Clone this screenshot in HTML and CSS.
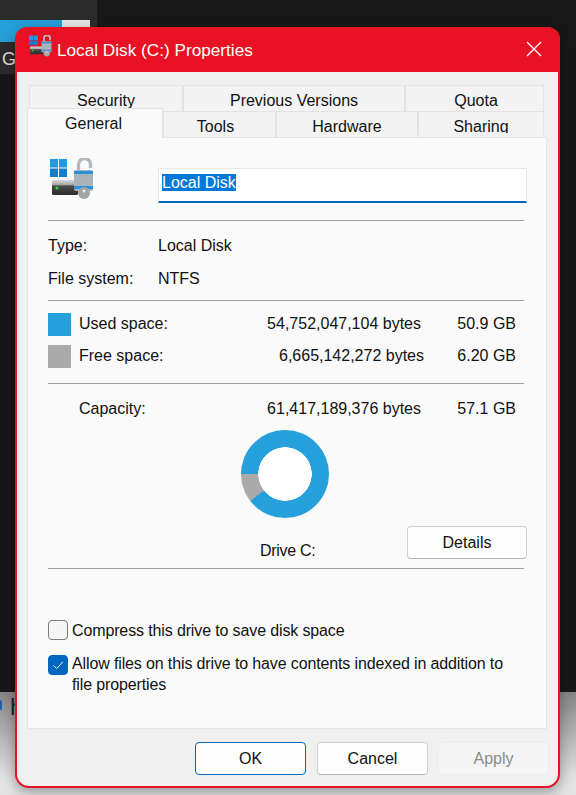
FILE: index.html
```html
<!DOCTYPE html>
<html lang="en">
<head>
    <meta charset="UTF-8">
    <title>Local Disk (C:) Properties</title>
    <link rel="stylesheet" href="styles.css">
</head>
<body>

    <!-- Things behind the dialog -->
    <div class="backdrop">
        <div class="bg-panel">
            <div class="bg-bar"><div class="bg-bar-fill"></div></div>
            <div class="bg-letter">G</div>
        </div>
    </div>
    <div class="bg-lower">
        <div class="bg-sliver"></div>
        <span class="bg-text">h</span>
    </div>

    <svg class="defs" width="0" height="0">
        <defs>
            <linearGradient id="driveBody" x1="0" y1="0" x2="0" y2="1">
                <stop offset="0" stop-color="#d8d8d8"/>
                <stop offset="0.3" stop-color="#a8a8a8"/>
                <stop offset="0.4" stop-color="#4a4a4a"/>
                <stop offset="1" stop-color="#2c2c2c"/>
            </linearGradient>
        </defs>
        <symbol id="driveIcon" viewBox="0 0 46 42">
            <rect x="2" y="22" width="26" height="15" rx="1.5" fill="url(#driveBody)"/>
            <circle cx="7" cy="30" r="1.6" fill="#35d335"/>
            <rect x="0" y="1" width="8" height="8.5" fill="#1d9be4"/>
            <rect x="9" y="1" width="8" height="8.5" fill="#1d9be4"/>
            <rect x="0" y="10.5" width="8" height="8.5" fill="#0f7fd0"/>
            <rect x="9" y="10.5" width="8" height="8.5" fill="#0f7fd0"/>
            <path d="M28.5 13V6.5a6 6 0 0 1 12 0V10" fill="none" stroke="#b5b9bd" stroke-width="3.4"/>
            <rect x="24" y="12" width="19" height="21" rx="2" fill="#aab2ba"/>
            <rect x="24" y="13" width="19" height="3" fill="#2b8fdc"/>
            <rect x="24" y="28" width="19" height="3" fill="#2b8fdc"/>
            <circle cx="34" cy="35" r="6" fill="#a3a6a9"/>
            <circle cx="34" cy="33" r="1.5" fill="#ececec"/>
        </symbol>
    </svg>

    <div class="dialog">
        <div class="titlebar">
            <svg class="title-icon"><use href="#driveIcon"/></svg>
            <span class="title-text">Local Disk (C:) Properties</span>
            <svg class="close-icon" viewBox="0 0 16 16">
                <path d="M1 1L15 15M15 1L1 15" stroke="#fff" stroke-width="1.3" fill="none"/>
            </svg>
        </div>

        <div class="dialog-body">
            <div class="tabs">
                <div class="tab-row tab-row-back">
                    <div class="tab tab-security">Security</div>
                    <div class="tab tab-versions">Previous Versions</div>
                    <div class="tab tab-quota">Quota</div>
                </div>
                <div class="tab-row tab-row-front">
                    <div class="tab tab-general">General</div>
                    <div class="tab tab-tools">Tools</div>
                    <div class="tab tab-hardware">Hardware</div>
                    <div class="tab tab-sharing">Sharing</div>
                </div>
            </div>

            <div class="panel">
                <div class="name-row">
                    <svg class="drive-icon"><use href="#driveIcon"/></svg>
                    <div class="name-input"><span class="selected">Local Disk</span></div>
                </div>
                <hr class="rule rule-first">

                <div class="info-row info-type"><span class="info-label">Type:</span><span>Local Disk</span></div>
                <div class="info-row info-fs"><span class="info-label">File system:</span><span>NTFS</span></div>
                <hr class="rule rule-second">

                <div class="space-row space-used">
                    <div class="swatch swatch-used"></div>
                    <span class="space-label">Used space:</span>
                    <span class="space-bytes">54,752,047,104 bytes</span>
                    <span class="space-size">50.9 GB</span>
                </div>
                <div class="space-row space-free">
                    <div class="swatch swatch-free"></div>
                    <span class="space-label">Free space:</span>
                    <span class="space-bytes">6,665,142,272 bytes</span>
                    <span class="space-size">6.20 GB</span>
                </div>
                <hr class="rule rule-third">

                <div class="space-row space-capacity">
                    <div class="swatch swatch-none"></div>
                    <span class="space-label">Capacity:</span>
                    <span class="space-bytes">61,417,189,376 bytes</span>
                    <span class="space-size">57.1 GB</span>
                </div>

                <div class="chart-area">
                    <div class="donut"></div>
                    <div class="drive-row">
                        <span class="drive-label">Drive C:</span>
                        <button class="btn btn-details" type="button">Details</button>
                    </div>
                </div>
                <hr class="rule rule-fourth">

                <div class="check-row check-compress">
                    <div class="checkbox"></div>
                    <span>Compress this drive to save disk space</span>
                </div>
                <div class="check-row check-index">
                    <div class="checkbox checkbox-on">
                        <svg viewBox="0 0 20 20"><path d="M5 10.5L8.5 14L15.5 6.5" fill="none" stroke="#fff" stroke-width="1"/></svg>
                    </div>
                    <span>Allow files on this drive to have contents indexed in addition to file properties</span>
                </div>
            </div>

            <div class="footer">
                <button class="btn btn-ok" type="button">OK</button>
                <button class="btn" type="button">Cancel</button>
                <button class="btn btn-disabled" type="button">Apply</button>
            </div>
        </div>
    </div>

</body>
</html>
```

FILE: styles.css
```css
* {
    box-sizing: border-box;
}

html, body {
    height: 795px;
}

body {
    margin: 0;
    overflow: hidden;
    position: relative;
    font-family: 'Liberation Sans', Arial, sans-serif;
    font-size: 16px;
    color: #111;
    background: #181818;
}

.defs {
    position: absolute;
}

/* Background */
.backdrop {
    height: 692px;
}

.bg-panel {
    width: 97px;
    height: 74px;
    padding-top: 20px;
    background: #2b2b2b;
}

.bg-bar {
    width: 90px;
    height: 22px;
    background: #e6e6e6;
}

.bg-bar-fill {
    width: 62px;
    height: 100%;
    background: #26a0da;
}

.bg-letter {
    font-size: 18px;
    color: #ddd;
    padding: 7px 0 0 2px;
}

.bg-lower {
    display: flex;
    height: 103px;
    padding-top: 1px;
    background: linear-gradient(#858585, #e4e4e4 85%);
}

.bg-sliver {
    width: 2px;
    height: 10px;
    margin-top: 7px;
    border-radius: 0 2px 2px 0;
    background: #1f5fa8;
}

.bg-text {
    font-size: 24px;
    color: #222;
    margin-left: 8px;
}

/* Dialog */
.dialog {
    position: absolute;
    left: 15px;
    top: 27px;
    width: 545px;
    height: 761px;
    background: #f0f0f0;
    border: 2px solid #e81224;
    border-top: 0;
    border-radius: 14px;
    display: flex;
    flex-direction: column;
    box-shadow: 0 4px 14px rgba(0, 0, 0, 0.35);
}

.titlebar {
    height: 45px;
    margin: 0 -2px;
    background: #e81224;
    border-radius: 12px 12px 0 0;
    color: #fff;
    display: flex;
    align-items: center;
    padding-left: 14px;
}

.title-icon {
    width: 24px;
    height: 22px;
    margin-top: -7px;
}

.title-text {
    font-size: 17.2px;
    margin: 2px 0 0 4px;
}

.close-icon {
    width: 16px;
    height: 16px;
    margin-left: auto;
    margin-right: 18px;
    margin-top: -1px;
}

.dialog-body {
    flex: 1;
    padding: 13px 0 0 10px;
    display: flex;
    flex-direction: column;
}

/* Tabs */
.tabs {
    height: 52px;
}

.tab-row {
    display: flex;
    height: 26px;
}

.tab-row-back {
    margin-left: 2px;
}

.tab {
    height: 26px;
    background: #f3f3f3;
    border: 1px solid #e3e3e3;
    border-bottom: 0;
    text-align: center;
    line-height: 29px;
    overflow: hidden;
}

.tab-security { width: 154px; }
.tab-versions { width: 222px; }
.tab-quota { width: 139px; padding-left: 3px; }
.tab-tools { width: 113px; padding-right: 8px; }
.tab-hardware { width: 142px; }

/* the descender of "Sharing" is cut off in the real dialog */
.tab-sharing {
    width: 126px;
    border-bottom: 4px solid #f3f3f3;
}

.tab-general {
    width: 136px;
    height: 30px;
    margin-top: -3px;
    padding-right: 3px;
    position: relative;
    z-index: 1;
    background: #fafafa;
    line-height: 29px;
}

/* Panel */
.panel {
    width: 520px;
    height: 592px;
    background: #fafafa;
    border: 1px solid #e5e5e5;
    padding: 0 20px;
}

.name-row {
    display: flex;
    padding-top: 20px;
    height: 65px;
}

.drive-icon {
    flex: none;
    width: 46px;
    height: 42px;
    margin: 0 62px 0 2px;
}

.name-input {
    flex: none;
    width: 369px;
    height: 35px;
    margin-top: 10px;
    background: #fff;
    border: 1px solid #e8e8e8;
    border-bottom: 2px solid #0067c0;
    padding: 4px 3px;
    line-height: 20px;
}

.selected {
    background: #0078d7;
    color: #fff;
}

.rule {
    width: 476px;
    height: 1px;
    margin: 0;
    border: 0;
    background: #a0a0a0;
}

.rule-first { margin-top: 17px; }

.info-row {
    display: flex;
    height: 20px;
    line-height: 20px;
}

.info-label {
    width: 110px;
}

.info-type { margin-top: 15px; }
.info-fs { margin-top: 13px; }
.rule-second { margin-top: 11px; }

.space-row {
    display: flex;
    align-items: center;
    height: 24px;
    width: 468px;
}

.space-used { margin-top: 11px; }
.space-free { margin-top: 8px; }
.rule-third { margin-top: 15px; }
.space-capacity { margin-top: 13px; }

.swatch {
    width: 23px;
    height: 23px;
    margin-right: 8px;
}

.swatch-used { background: #26a0da; }
.swatch-free { background: #aaaaaa; }
.swatch-none { background: transparent; }

.space-label {
    flex: 1;
}

.space-bytes {
    margin-right: 35px;
}

.space-free .space-bytes {
    margin-right: 32px;
}

.space-size {
    width: 60px;
    text-align: right;
}

/* Donut */
.chart-area {
    height: 138px;
}

.donut {
    width: 88px;
    height: 88px;
    margin: 9px 0 0 193px;
    border-radius: 50%;
    background:
        radial-gradient(circle, #fff 26.5px, transparent 27px),
        conic-gradient(#26a0da 0deg 232deg, #aaaaaa 232deg 270deg, #26a0da 270deg);
}

.drive-row {
    display: flex;
    align-items: flex-start;
    margin-top: 8px;
}

.drive-label {
    flex: none;
    margin: 16px 0 0 212px;
    width: 147px;
    letter-spacing: -0.3px;
}

.btn {
    width: 111px;
    height: 33px;
    padding: 0;
    background: #fdfdfd;
    border: 1px solid #d0d0d0;
    border-bottom-color: #b5b5b5;
    border-radius: 4px;
    font-family: inherit;
    font-size: 16px;
    color: #111;
}

.btn-details {
    flex: none;
    width: 120px;
}

/* Checkboxes */
.check-row {
    display: flex;
    gap: 4px;
    line-height: 21px;
    letter-spacing: -0.13px;
}

.check-compress { margin-top: 51px; }
.check-index { margin-top: 12px; }

.checkbox {
    flex: none;
    width: 20px;
    height: 20px;
    background: #f5f5f5;
    border: 1px solid #7a7a7a;
    border-radius: 4px;
}

.checkbox-on {
    margin-top: 2px;
    background: #0067c0;
    border-color: #0067c0;
}

.checkbox-on svg {
    display: block;
    width: 18px;
    height: 18px;
}

/* Footer buttons */
.footer {
    display: flex;
    gap: 11px;
    margin-top: 13px;
    padding-left: 168px;
}

.btn-ok {
    border: 1px solid #0067c0;
}

.btn-disabled {
    margin-left: -1px;
    background: #f5f5f5;
    border-color: #ececec;
    color: #8a8a8a;
}
```
